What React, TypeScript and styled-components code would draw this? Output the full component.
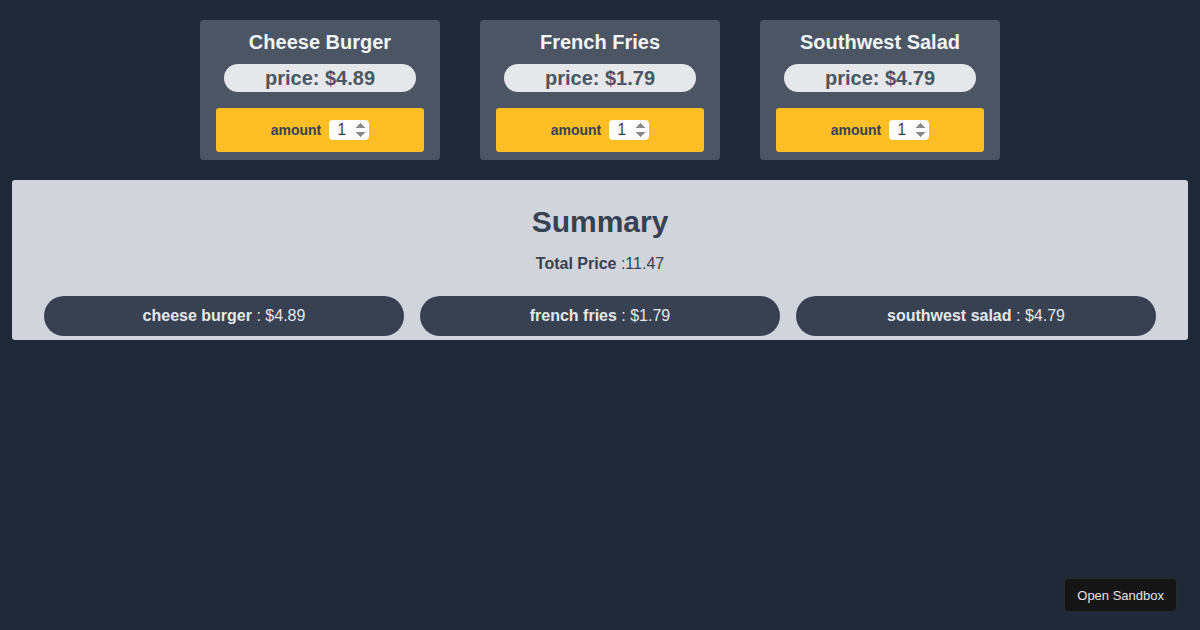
import * as React from 'react'
import styled, { createGlobalStyle } from 'styled-components'

const GlobalStyle = createGlobalStyle`
  html, body {
    margin: 0;
    padding: 0;
    background: #1f2937;
    font-family: "Liberation Sans", Arial, sans-serif;
  }
`

const Page = styled.div`
  width: 1200px;
  height: 630px;
  box-sizing: border-box;
  padding: 20px 12px 0;
  position: relative;
`

const CardRow = styled.div`
  display: flex;
  justify-content: center;
  gap: 40px;
`

const Card = styled.div`
  width: 240px;
  box-sizing: border-box;
  background: #4b5563;
  border-radius: 4px;
  padding: 10px 16px 8px;
  display: flex;
  flex-direction: column;
  align-items: center;
`

const CardTitle = styled.h2`
  margin: 0;
  font-size: 20px;
  line-height: 24px;
  font-weight: 700;
  color: #f3f4f6;
`

const PricePill = styled.div`
  margin-top: 10px;
  width: 192px;
  height: 28px;
  border-radius: 14px;
  background: #e5e7eb;
  color: #4b5563;
  font-size: 20px;
  font-weight: 700;
  line-height: 28px;
  text-align: center;
`

const AmountBar = styled.label`
  margin-top: 16px;
  width: 100%;
  height: 44px;
  background: #fbbf24;
  border-radius: 3px;
  display: flex;
  align-items: center;
  justify-content: center;
  gap: 8px;
  font-size: 14px;
  font-weight: 700;
  color: #374151;
`

const AmountInput = styled.input`
  width: 40px;
  height: 20px;
  box-sizing: border-box;
  border: none;
  border-radius: 4px;
  background: #fff;
  padding: 0 1px 0 8px;
  font-family: "Liberation Sans", Arial, sans-serif;
  font-size: 16px;
  color: #374151;
  outline: none;
  &::-webkit-inner-spin-button,
  &::-webkit-outer-spin-button {
    opacity: 1;
    height: 18px;
  }
`

const Summary = styled.section`
  margin-top: 20px;
  background: #d1d5db;
  border-radius: 3px;
  padding: 24px 32px 4px;
  display: flex;
  flex-direction: column;
  align-items: center;
`

const SummaryTitle = styled.h1`
  margin: 0;
  font-size: 30px;
  line-height: 36px;
  font-weight: 700;
  color: #374151;
`

const Total = styled.p`
  margin: 14px 0 0;
  font-size: 16px;
  line-height: 20px;
  color: #374151;
  b {
    font-weight: 700;
  }
`

const ItemGrid = styled.div`
  margin-top: 22px;
  width: 100%;
  display: grid;
  grid-template-columns: repeat(3, 1fr);
  gap: 16px;
`

const ItemPill = styled.div`
  height: 40px;
  border-radius: 20px;
  background: #374151;
  color: #e5e7eb;
  font-size: 16px;
  line-height: 40px;
  text-align: center;
  b {
    font-weight: 700;
  }
`

const SandboxButton = styled.button`
  position: absolute;
  right: 23px;
  bottom: 18px;
  height: 34px;
  padding: 0 12px;
  background: #151515;
  border: 1px solid #2a2a2a;
  border-radius: 4px;
  color: #e5e5e5;
  font-family: "Liberation Sans", Arial, sans-serif;
  font-size: 13px;
`

const items = [
  { name: 'Cheese Burger', price: 4.89 },
  { name: 'French Fries', price: 1.79 },
  { name: 'Southwest Salad', price: 4.79 },
]

const App: React.FC = () => {
  const [amounts, setAmounts] = React.useState<number[]>(items.map(() => 1))
  const total = items.reduce((sum, item, i) => sum + item.price * amounts[i], 0)

  return (
    <Page>
      <GlobalStyle />
      <CardRow>
        {items.map((item, i) => (
          <Card key={item.name}>
            <CardTitle>{item.name}</CardTitle>
            <PricePill>price: ${item.price.toFixed(2)}</PricePill>
            <AmountBar>
              amount
              <AmountInput
                type="number"
                min={0}
                value={amounts[i]}
                onChange={e => {
                  const next = [...amounts]
                  next[i] = Number(e.target.value)
                  setAmounts(next)
                }}
              />
            </AmountBar>
          </Card>
        ))}
      </CardRow>
      <Summary>
        <SummaryTitle>Summary</SummaryTitle>
        <Total>
          <b>Total Price</b> :{total.toFixed(2)}
        </Total>
        <ItemGrid>
          {items.map((item, i) => (
            <ItemPill key={item.name}>
              <b>{item.name.toLowerCase()}</b> : ${(item.price * amounts[i]).toFixed(2)}
            </ItemPill>
          ))}
        </ItemGrid>
      </Summary>
      <SandboxButton>Open Sandbox</SandboxButton>
    </Page>
  )
}

export default App
